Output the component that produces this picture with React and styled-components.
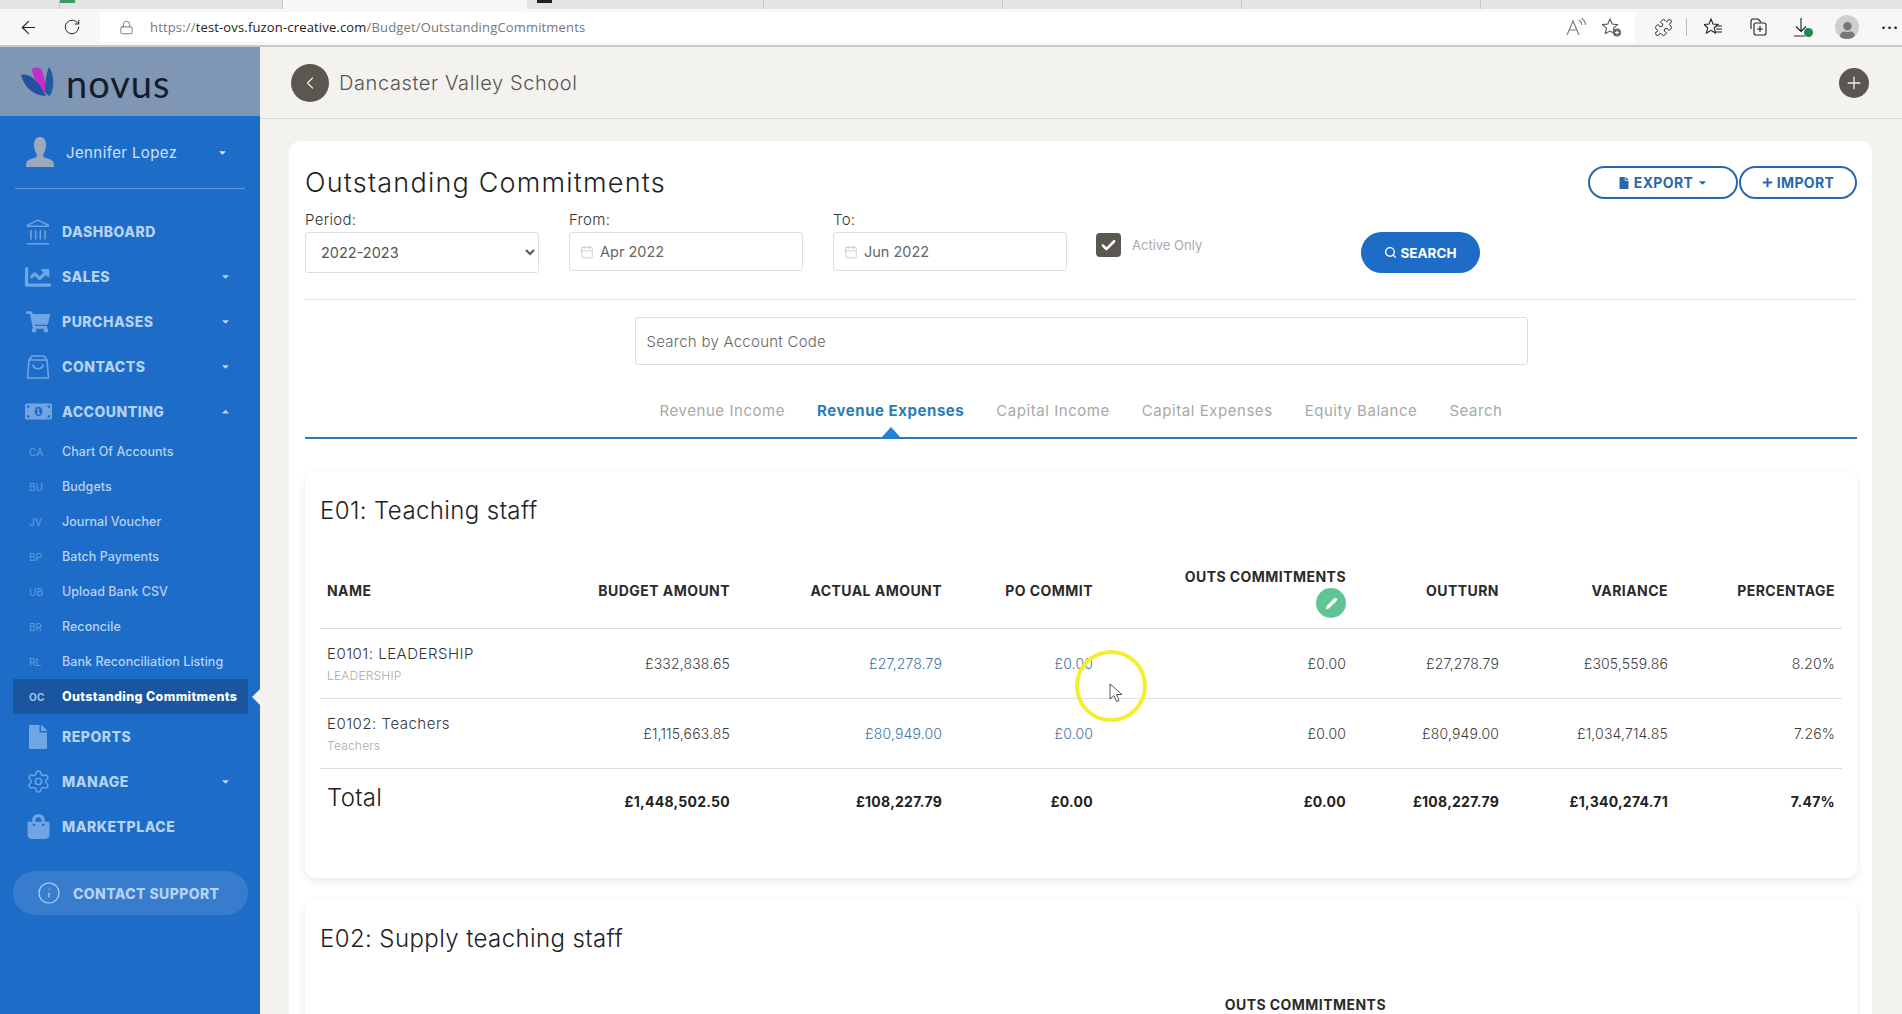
import React from 'react';
import styled, { createGlobalStyle } from 'styled-components';
import {
  ArrowLeft, RotateCw, Lock, Puzzle, Landmark, Settings, Info, Plus, ChevronLeft, Calendar, Search, Check, Pencil,
} from 'lucide-react';
import { FaChartLine, FaShoppingCart, FaMoneyBillAlt, FaFile, FaShoppingBag, FaCaretDown, FaCaretUp, FaPlus, FaUser } from 'react-icons/fa';

const font = `Inter, "Noto Sans", sans-serif`;

const GlobalStyle = createGlobalStyle`
  html, body { margin: 0; padding: 0; height: 100%; overflow: hidden; background: #f3f2ee; }
  * { box-sizing: border-box; }
  body { font-family: ${font}; color: #444; }
`;

const Page = styled.div`
  position: relative;
  height: 100vh;
  overflow: hidden;
  display: flex;
  flex-direction: column;
`;

/* browser chrome */
const TabStrip = styled.div`
  height: 9px;
  flex: none;
  display: flex;
  background: #e4e4e4;
  overflow: hidden;
`;

const BrowserTab = styled.div`
  width: ${(p) => p.$w}px;
  flex: none;
  height: 100%;
  padding-left: ${(p) => p.$pad || 0}px;
  background: ${(p) => (p.$active ? '#f7f7f7' : 'transparent')};
  border-right: ${(p) => (p.$active ? 'none' : '1px solid #c4c4c4')};
`;

const Favicon = styled.span`
  display: block;
  width: 15px;
  height: 3px;
  background: ${(p) => p.$color};
`;

const Toolbar = styled.div`
  height: 38px;
  flex: none;
  display: flex;
  align-items: center;
  background: #f7f7f7;
  border-bottom: 2px solid #c9c9c9;
  color: #222;
`;

const NavButton = styled.span`
  width: 44px;
  height: 30px;
  flex: none;
  display: flex;
  align-items: center;
  justify-content: center;
  margin-left: ${(p) => p.$ml || 0}px;
`;

const AddressBar = styled.div`
  width: 1535px;
  height: 30px;
  flex: none;
  margin-left: 6px;
  background: #fff;
  display: flex;
  align-items: center;
  padding: 0 5px 0 19px;
`;

const Url = styled.span`
  margin-left: 16px;
  flex: 1;
  font-family: "Open Sans", sans-serif;
  font-size: 13px;
  letter-spacing: 0.16px;
  color: #777;
  span { color: #222; }
`;

const AddressIcon = styled.span`
  width: 36px;
  display: flex;
  justify-content: center;
  color: #555;
`;

const ToolSep = styled.span`
  width: 5px;
  height: 18px;
  flex: none;
  border-left: 1px solid #bbb;
  margin-left: 1px;
`;

const ToolButton = styled.span`
  position: relative;
  width: 44px;
  flex: none;
  display: flex;
  align-items: center;
  justify-content: center;
  margin-left: ${(p) => p.$ml || 0}px;
`;

const MoreButton = styled.span`
  width: 24px;
  margin-left: 9px;
  flex: none;
  text-align: center;
  font-size: 15px;
  font-weight: 700;
  letter-spacing: 1px;
`;

const Badge = styled.span`
  position: absolute;
  left: 25px;
  top: 10px;
  width: 9px;
  height: 9px;
  border-radius: 50%;
  background: #1d8a4c;
`;

const ProfileDot = styled.span`
  width: 24px;
  height: 24px;
  border-radius: 50%;
  background: #cfcfcf;
  color: #777;
  display: flex;
  align-items: flex-end;
  justify-content: center;
  overflow: hidden;
`;

/* app layout */
const Body = styled.div`
  flex: 1;
  min-height: 0;
  display: flex;
`;

const Sidebar = styled.aside`
  width: 260px;
  flex: none;
  background: #1d6cc7;
  display: flex;
  flex-direction: column;
`;

const LogoBox = styled.div`
  height: 69px;
  flex: none;
  background: #7f97b5;
  display: flex;
  align-items: center;
  padding-left: 21px;
  gap: 12px;
`;

const LogoText = styled.span`
  font-family: Lato, sans-serif;
  font-size: 38px;
  line-height: 1;
  letter-spacing: 1px;
  color: #161d2a;
  margin-top: 2px;
`;

const UserRow = styled.div`
  height: 73px;
  margin: 0 15px;
  padding: 0 17px 0 11px;
  flex: none;
  display: flex;
  align-items: center;
  border-bottom: 1px solid #5b98dd;
  color: #cfe0f5;
  font-size: 15px;
  letter-spacing: 0.4px;
`;

const UserName = styled.span`
  flex: 1;
  margin-left: 12px;
`;

const NavList = styled.nav`
  margin-top: 20px;
  display: flex;
  flex-direction: column;
`;

const NavItem = styled.div`
  height: 45px;
  flex: none;
  display: flex;
  align-items: center;
  padding: 0 29px 0 22px;
  color: #b5d2f4;
  font-size: 14px;
  font-weight: 800;
  letter-spacing: 0.5px;
`;

const NavIcon = styled.span`
  width: 32px;
  display: flex;
  justify-content: center;
  margin-right: 8px;
  color: #70a5e4;
`;

const NavLabel = styled.span`
  flex: 1;
`;

const SubItem = styled.div`
  position: relative;
  height: 35px;
  flex: none;
  display: flex;
  align-items: center;
  margin: 0 12px 0 13px;
  padding-left: 16px;
  font-size: 12.5px;
  font-weight: ${(p) => (p.$active ? 800 : 500)};
  letter-spacing: ${(p) => (p.$active ? 0.35 : 0.05)}px;
  color: ${(p) => (p.$active ? '#fff' : '#b5d2f4')};
  background: ${(p) => (p.$active ? '#1a569f' : 'transparent')};
  white-space: nowrap;
`;

const SubCode = styled.span`
  width: 33px;
  font-size: 10px;
  font-weight: ${(p) => (p.$active ? 700 : 500)};
  color: ${(p) => (p.$active ? '#a3c4ec' : '#5a97de')};
`;

const ActiveArrow = styled.span`
  position: absolute;
  right: -12px;
  top: 10px;
  width: 0;
  height: 0;
  border-top: 8px solid transparent;
  border-bottom: 8px solid transparent;
  border-right: 8px solid #f3f2ee;
`;

const SupportPill = styled.div`
  height: 44px;
  margin: 22px 12px 0 13px;
  padding-left: 24px;
  flex: none;
  display: flex;
  align-items: center;
  gap: 12px;
  border-radius: 22px;
  background: rgba(255, 255, 255, 0.12);
  color: #b5d2f4;
  font-size: 14px;
  font-weight: 800;
  letter-spacing: 0.4px;
`;

const Main = styled.main`
  flex: 1;
  min-width: 0;
  display: flex;
  flex-direction: column;
`;

const TopBar = styled.header`
  height: 72px;
  flex: none;
  display: flex;
  align-items: center;
  padding: 0 33px 0 31px;
  border-bottom: 1px solid #dcdbd7;
`;

const RoundButton = styled.span`
  width: ${(p) => p.$size}px;
  height: ${(p) => p.$size}px;
  border-radius: 50%;
  flex: none;
  display: flex;
  align-items: center;
  justify-content: center;
  background: #5a5650;
  color: #f0eeea;
`;

const SchoolName = styled.h2`
  flex: 1;
  margin: 0 0 0 10px;
  font-size: 20px;
  font-weight: 300;
  letter-spacing: 0.6px;
  color: #555;
`;

const Content = styled.div`
  padding: 22px 30px 0 29px;
`;

const Card = styled.section`
  background: #fff;
  border-radius: 12px 12px 0 0;
  padding: 26px 15px 0 16px;
`;

const TitleRow = styled.div`
  height: 43px;
  display: flex;
  align-items: flex-start;
  justify-content: space-between;
`;

const PageTitle = styled.h1`
  margin: 0;
  font-size: 27px;
  line-height: 32px;
  font-weight: 300;
  letter-spacing: 1.2px;
  color: #1f1f1f;
`;

const ButtonGroup = styled.div`
  display: flex;
  gap: 1px;
  margin-top: -1px;
`;

const OutlineButton = styled.button`
  width: ${(p) => p.$w}px;
  height: 33px;
  border: 2px solid #2a68ad;
  border-radius: 17px;
  background: #fff;
  color: #2a68ad;
  font-family: ${font};
  font-size: 14px;
  font-weight: 700;
  letter-spacing: 0.35px;
  display: flex;
  align-items: center;
  justify-content: center;
  gap: 4px;
  padding: 0;
`;

const Filters = styled.div`
  display: flex;
  align-items: flex-start;
  gap: 30px;
  height: 63px;
`;

const Field = styled.div`
  width: 234px;
  display: flex;
  flex-direction: column;
`;

const FieldLabel = styled.label`
  height: 22px;
  font-size: 15px;
  line-height: 20px;
  font-weight: 300;
  letter-spacing: 0.3px;
  color: #333;
`;

const PeriodSelect = styled.select`
  height: 41px;
  width: 100%;
  padding: 0 6px 0 11px;
  border: 1px solid #ddd;
  border-radius: 3px;
  background: #fff;
  font-family: ${font};
  font-size: 14.5px;
  color: #555;
`;

const DateBox = styled.div`
  height: 39px;
  display: flex;
  align-items: center;
  gap: 6px;
  padding-left: 10px;
  border: 1px solid #ddd;
  border-radius: 3px;
  font-size: 14.5px;
  color: #666;
  svg { color: #bbb; }
`;

const CheckWrap = styled.div`
  display: flex;
  align-items: center;
  gap: 11px;
  margin: 23px 0 0 -1px;
  width: 235px;
`;

const CheckBox = styled.span`
  width: 25px;
  height: 24px;
  border-radius: 4px;
  background: #5a5650;
  color: #fff;
  display: flex;
  align-items: center;
  justify-content: center;
`;

const CheckLabel = styled.span`
  font-size: 13px;
  color: #aaa;
`;

const SearchButton = styled.button`
  width: 119px;
  height: 41px;
  margin-top: 22px;
  border: none;
  border-radius: 21px;
  background: #1d6cc7;
  color: #fff;
  font-family: ${font};
  font-size: 13.5px;
  font-weight: 700;
  display: flex;
  align-items: center;
  justify-content: center;
  gap: 3px;
`;

const Divider = styled.hr`
  margin: 26px 0 17px;
  border: none;
  border-top: 1px solid #e6e6e6;
`;

const AccountSearch = styled.input`
  display: block;
  width: 893px;
  height: 48px;
  margin: 0 auto;
  padding: 0 11px;
  border: 1px solid #ddd;
  border-radius: 3px;
  font-family: ${font};
  font-size: 15px;
  font-weight: 300;
  letter-spacing: 0.25px;
  color: #555;
  &::placeholder { color: #666; }
`;

const TabBar = styled.div`
  height: 74px;
  padding-bottom: 16px;
  display: flex;
  align-items: flex-end;
  justify-content: center;
  gap: 32px;
  border-bottom: 2px solid #2a7cb9;
`;

const Tab = styled.span`
  position: relative;
  font-size: 15px;
  line-height: 20px;
  letter-spacing: ${(p) => (p.$active ? 0.55 : 0.55)}px;
  font-weight: ${(p) => (p.$active ? 700 : 400)};
  color: ${(p) => (p.$active ? '#2a7cb9' : '#a8a8a8')};
  ${(p) =>
    p.$active &&
    `&::after {
      content: '';
      position: absolute;
      left: 50%;
      bottom: -16px;
      margin-left: -9px;
      border-left: 9px solid transparent;
      border-right: 9px solid transparent;
      border-bottom: 10px solid #1f82dc;
    }`}
`;

const SectionCard = styled.div`
  margin-top: ${(p) => p.$mt}px;
  padding: 25px 15px ${(p) => p.$pb || 0}px;
  background: #fff;
  border-radius: 10px;
  box-shadow: 0 3px 9px rgba(0, 0, 0, 0.09);
`;

const SectionTitle = styled.h3`
  margin: 0;
  height: 30px;
  font-size: 24px;
  line-height: 30px;
  font-weight: 300;
  letter-spacing: 0.4px;
  color: #222;
`;

const TableRow = styled.div`
  display: grid;
  grid-template-columns: ${(p) => p.$cols};
  align-items: center;
  height: ${(p) => p.$h}px;
  margin-top: ${(p) => p.$mt || 0}px;
  border-bottom: ${(p) => (p.$noLine ? 'none' : '1px solid #dedede')};
`;

const Cell = styled.div`
  padding: 0 7px;
  text-align: ${(p) => (p.$left ? 'left' : 'right')};
  font-size: 14px;
  white-space: nowrap;
  letter-spacing: ${(p) => (p.$strong ? 0.25 : 0.15)}px;
  font-weight: ${(p) => (p.$strong ? 700 : 300)};
  color: ${(p) => (p.$strong ? '#222' : p.$link ? '#3f74a5' : '#3d3d3d')};
`;

const HeadCell = styled(Cell)`
  font-size: 14px;
  font-weight: 700;
  letter-spacing: 0.45px;
  color: #2b2b2b;
  padding-top: ${(p) => p.$top || 0}px;
  ${(p) => p.$col && `grid-column: ${p.$col}; align-self: start;`}
`;

const EditDot = styled.span`
  width: 30px;
  height: 30px;
  margin-top: 3px;
  border-radius: 50%;
  background: #61c494;
  color: #fff;
  display: inline-flex;
  align-items: center;
  justify-content: center;
`;

const RowName = styled.div`
  font-size: 15px;
  line-height: 20px;
  font-weight: 300;
  letter-spacing: 0.5px;
  color: #333;
`;

const RowSub = styled.div`
  margin-top: 5px;
  font-size: 12px;
  line-height: 14px;
  font-weight: 300;
  letter-spacing: 0.2px;
  color: #aaa;
`;

const TotalLabel = styled.div`
  margin-top: -8px;
  font-size: 24px;
  font-weight: 300;
  letter-spacing: 0.3px;
  color: #222;
`;

const CursorRing = styled.div`
  position: absolute;
  left: 1075px;
  top: 650px;
  width: 72px;
  height: 72px;
  border-radius: 50%;
  border: 4px solid #f3ef2e;
  display: flex;
  align-items: center;
  justify-content: center;
`;

const CursorArrow = styled.svg`
  margin: 14px 0 0 10px;
`;

const COLS_A = '200px 217px 212px 151px 253px 153px 169px 167px';
const COLS_B = '200px 217px 212px 170px 274px 140px 155px 154px';

const HEADS = ['BUDGET AMOUNT', 'ACTUAL AMOUNT', 'PO COMMIT'];

const mainNavTop = [
  { label: 'DASHBOARD', icon: <Landmark size={28} strokeWidth={1.3} /> },
  { label: 'SALES', icon: <FaChartLine size={26} />, caret: true },
  { label: 'PURCHASES', icon: <FaShoppingCart size={24} />, caret: true },
  { label: 'CONTACTS', icon: <BagIcon />, caret: true },
  { label: 'ACCOUNTING', icon: <FaMoneyBillAlt size={27} />, open: true },
];

const subNav = [
  ['CA', 'Chart Of Accounts'],
  ['BU', 'Budgets'],
  ['JV', 'Journal Voucher'],
  ['BP', 'Batch Payments'],
  ['UB', 'Upload Bank CSV'],
  ['BR', 'Reconcile'],
  ['RL', 'Bank Reconciliation Listing'],
];

const mainNavBottom = [
  { label: 'REPORTS', icon: <FaFile size={24} /> },
  { label: 'MANAGE', icon: <Settings size={25} strokeWidth={1.4} />, caret: true },
  { label: 'MARKETPLACE', icon: <FaShoppingBag size={25} /> },
];

const tabs = ['Revenue Income', 'Revenue Expenses', 'Capital Income', 'Capital Expenses', 'Equity Balance', 'Search'];

const rows = [
  { name: 'E0101: LEADERSHIP', sub: 'LEADERSHIP', budget: '£332,838.65', actual: '£27,278.79', po: '£0.00', outs: '£0.00', outturn: '£27,278.79', variance: '£305,559.86', pct: '8.20%' },
  { name: 'E0102: Teachers', sub: 'Teachers', budget: '£1,115,663.85', actual: '£80,949.00', po: '£0.00', outs: '£0.00', outturn: '£80,949.00', variance: '£1,034,714.85', pct: '7.26%' },
];

function BagIcon() {
  return (
    <svg width="24" height="26" viewBox="0 0 24 26" fill="none" stroke="currentColor" strokeWidth="1.6">
      <path d="M3 6h18l1.5 18h-21z" strokeLinejoin="round" />
      <path d="M3 6l3-4h12l3 4" strokeLinejoin="round" />
      <path d="M7 11c1 5 9 5 10 0" strokeLinecap="round" />
    </svg>
  );
}

function Logo() {
  return (
    <svg width="33" height="29" viewBox="0 0 33 29">
      <path d="M11 2c3-2 7-2 9 0 3 5 5 14 5 24C17 20 12 11 11 2z" fill="#c22fc4" />
      <path d="M0 8c8-3 18 6 25 21C13 29 3 20 0 8z" fill="#23509f" />
      <path d="M28 0c5 7 6 20 1 29-3-1-4-2-5-4 0-10 1-18 4-25z" fill="#24589f" />
    </svg>
  );
}

function Avatar() {
  return (
    <svg width="28" height="30" viewBox="0 0 28 30" fill="#9aa9bb">
      <path d="M14 0c4 0 6 3 6 8 0 4-2 8-3 10 0 2 2 3 6 4s5 3 5 8H0c0-5 1-7 5-8s6-2 6-4c-1-2-3-6-3-10 0-5 2-8 6-8z" />
    </svg>
  );
}

function ReadAloudIcon() {
  return (
    <svg width="20" height="18" viewBox="0 0 20 18" fill="none" stroke="#777" strokeWidth="1.1">
      <path d="M1 17L7 3l6 14M3.400 12h7.200" />
      <path d="M13 2c2 1.500 3 3 3 5M15.500 0c2.500 2 4 4.500 4 7" />
    </svg>
  );
}

function StarPlusIcon() {
  return (
    <svg width="20" height="19" viewBox="0 0 20 19" fill="none" stroke="#555" strokeWidth="1.1">
      <path d="M8 1l2.200 5 5.300.6-4 3.600 1.200 5.300L8 13l-4.700 2.500 1.200-5.300-4-3.600 5.300-.6z" />
      <circle cx="15" cy="14.500" r="4" fill="#666" stroke="none" />
      <path d="M15 12.500v4M13 14.500h4" stroke="#fff" />
    </svg>
  );
}

function StarListIcon() {
  return (
    <svg width="19" height="18" viewBox="0 0 19 18" fill="none" stroke="#222" strokeWidth="1.1">
      <path d="M7 1l2 5 5 .5-3.800 3.300 1.200 5.200L7 12.300 2.500 15l1.200-5.200L0 6.500 5 6z" />
      <path d="M12 8h6M12 11h6M11 14h7" />
    </svg>
  );
}

function CollectionsIcon() {
  return (
    <svg width="19" height="18" viewBox="0 0 19 18" fill="none" stroke="#222" strokeWidth="1.1">
      <path d="M3 11V3a2 2 0 0 1 2-2h5l3 3" />
      <rect x="6" y="5" width="12" height="12" rx="2" />
      <path d="M12 8v6M9 11h6" />
    </svg>
  );
}

function DownloadIcon() {
  return (
    <svg width="16" height="19" viewBox="0 0 16 19" fill="none" stroke="#222" strokeWidth="1.1">
      <path d="M8 0v13M3 8.500l5 5 5-5M1 18h11" />
    </svg>
  );
}

function ToggleCaret({ open }) {
  return open ? <FaCaretUp size={11} /> : <FaCaretDown size={11} />;
}

function NavEntry({ item }) {
  return (
    <NavItem>
      <NavIcon>{item.icon}</NavIcon>
      <NavLabel>{item.label}</NavLabel>
      {(item.caret || item.open) && <ToggleCaret open={item.open} />}
    </NavItem>
  );
}

export default function App() {
  return (
    <Page>
      <GlobalStyle />
      <TabStrip>
        <BrowserTab $w={60} />
        <BrowserTab $w={223}>
          <Favicon $color="#3f9b63" />
        </BrowserTab>
        <BrowserTab $w={244} $active />
        <BrowserTab $w={237} $pad={10}>
          <Favicon $color="#222" />
        </BrowserTab>
        <BrowserTab $w={239} />
        <BrowserTab $w={239} />
        <BrowserTab $w={239} />
      </TabStrip>
      <Toolbar>
        <NavButton $ml={6}>
          <ArrowLeft size={21} strokeWidth={1.3} />
        </NavButton>
        <NavButton>
          <RotateCw size={18} strokeWidth={1.3} />
        </NavButton>
        <AddressBar>
          <Lock size={15} strokeWidth={1.2} color="#555" />
          <Url>
            https://<span>test-ovs.fuzon-creative.com</span>/Budget/OutstandingCommitments
          </Url>
          <AddressIcon>
            <ReadAloudIcon />
          </AddressIcon>
          <AddressIcon>
            <StarPlusIcon />
          </AddressIcon>
        </AddressBar>
        <ToolButton $ml={6}>
          <Puzzle size={19} strokeWidth={1.2} />
        </ToolButton>
        <ToolSep />
        <ToolButton>
          <StarListIcon />
        </ToolButton>
        <ToolButton>
          <CollectionsIcon />
        </ToolButton>
        <ToolButton>
          <DownloadIcon />
          <Badge />
        </ToolButton>
        <ToolButton $ml={2}>
          <ProfileDot>
            <FaUser size={17} />
          </ProfileDot>
        </ToolButton>
        <MoreButton>···</MoreButton>
      </Toolbar>
      <Body>
        <Sidebar>
          <LogoBox>
            <Logo />
            <LogoText>novus</LogoText>
          </LogoBox>
          <UserRow>
            <Avatar />
            <UserName>Jennifer Lopez</UserName>
            <ToggleCaret />
          </UserRow>
          <NavList>
            {mainNavTop.map((item) => (
              <NavEntry key={item.label} item={item} />
            ))}
            {subNav.map(([code, label]) => (
              <SubItem key={code}>
                <SubCode>{code}</SubCode>
                {label}
              </SubItem>
            ))}
            <SubItem $active>
              <SubCode $active>OC</SubCode>
              Outstanding Commitments
              <ActiveArrow />
            </SubItem>
            {mainNavBottom.map((item) => (
              <NavEntry key={item.label} item={item} />
            ))}
          </NavList>
          <SupportPill>
            <Info size={24} strokeWidth={1.2} />
            CONTACT SUPPORT
          </SupportPill>
        </Sidebar>
        <Main>
          <TopBar>
            <RoundButton $size={38}>
              <ChevronLeft size={20} strokeWidth={1.5} />
            </RoundButton>
            <SchoolName>Dancaster Valley School</SchoolName>
            <RoundButton $size={30}>
              <Plus size={20} strokeWidth={1.6} />
            </RoundButton>
          </TopBar>
          <Content>
            <Card>
              <TitleRow>
                <PageTitle>Outstanding Commitments</PageTitle>
                <ButtonGroup>
                  <OutlineButton $w={150}>
                    <FaFile size={12} />
                    EXPORT
                    <FaCaretDown size={11} />
                  </OutlineButton>
                  <OutlineButton $w={118}>
                    <FaPlus size={11} />
                    IMPORT
                  </OutlineButton>
                </ButtonGroup>
              </TitleRow>
              <Filters>
                <Field>
                  <FieldLabel>Period:</FieldLabel>
                  <PeriodSelect defaultValue="2022-2023">
                    <option>2022-2023</option>
                  </PeriodSelect>
                </Field>
                <Field>
                  <FieldLabel>From:</FieldLabel>
                  <DateBox>
                    <Calendar size={14} strokeWidth={1.2} />
                    Apr 2022
                  </DateBox>
                </Field>
                <Field>
                  <FieldLabel>To:</FieldLabel>
                  <DateBox>
                    <Calendar size={14} strokeWidth={1.2} />
                    Jun 2022
                  </DateBox>
                </Field>
                <CheckWrap>
                  <CheckBox>
                    <Check size={17} strokeWidth={3.5} />
                  </CheckBox>
                  <CheckLabel>Active Only</CheckLabel>
                </CheckWrap>
                <SearchButton>
                  <Search size={13} strokeWidth={2.5} />
                  SEARCH
                </SearchButton>
              </Filters>
              <Divider />
              <AccountSearch placeholder="Search by Account Code" />
              <TabBar>
                {tabs.map((t) => (
                  <Tab key={t} $active={t === 'Revenue Expenses'}>
                    {t}
                  </Tab>
                ))}
              </TabBar>
              <SectionCard $mt={32} $pb={44}>
                <SectionTitle>E01: Teaching staff</SectionTitle>
                <TableRow $cols={COLS_A} $h={76} $mt={27}>
                  <HeadCell $left>NAME</HeadCell>
                  {HEADS.map((h) => (
                    <HeadCell key={h}>{h}</HeadCell>
                  ))}
                  <HeadCell $top={5}>
                    OUTS COMMITMENTS
                    <div>
                      <EditDot>
                        <Pencil size={13} fill="#fff" strokeWidth={1} />
                      </EditDot>
                    </div>
                  </HeadCell>
                  <HeadCell>OUTTURN</HeadCell>
                  <HeadCell>VARIANCE</HeadCell>
                  <HeadCell>PERCENTAGE</HeadCell>
                </TableRow>
                {rows.map((r) => (
                  <TableRow key={r.name} $cols={COLS_A} $h={70}>
                    <Cell $left>
                      <RowName>{r.name}</RowName>
                      <RowSub>{r.sub}</RowSub>
                    </Cell>
                    <Cell>{r.budget}</Cell>
                    <Cell $link>{r.actual}</Cell>
                    <Cell $link>{r.po}</Cell>
                    <Cell>{r.outs}</Cell>
                    <Cell>{r.outturn}</Cell>
                    <Cell>{r.variance}</Cell>
                    <Cell>{r.pct}</Cell>
                  </TableRow>
                ))}
                <TableRow $cols={COLS_A} $h={65} $noLine>
                  <Cell $left>
                    <TotalLabel>Total</TotalLabel>
                  </Cell>
                  <Cell $strong>£1,448,502.50</Cell>
                  <Cell $strong>£108,227.79</Cell>
                  <Cell $strong>£0.00</Cell>
                  <Cell $strong>£0.00</Cell>
                  <Cell $strong>£108,227.79</Cell>
                  <Cell $strong>£1,340,274.71</Cell>
                  <Cell $strong>7.47%</Cell>
                </TableRow>
              </SectionCard>
              <SectionCard $mt={21}>
                <SectionTitle>E02: Supply teaching staff</SectionTitle>
                <TableRow $cols={COLS_B} $h={76} $mt={27} $noLine>
                  <HeadCell $col={5} $top={15}>OUTS COMMITMENTS</HeadCell>
                </TableRow>
              </SectionCard>
            </Card>
          </Content>
        </Main>
      </Body>
      <CursorRing>
        <CursorArrow width="14" height="20" viewBox="0 0 14 20" fill="#fff" stroke="#555" strokeWidth="1">
          <path d="M1 1v15l4-3.500 2.500 6 2.500-1-2.500-6H13z" />
        </CursorArrow>
      </CursorRing>
    </Page>
  );
}
